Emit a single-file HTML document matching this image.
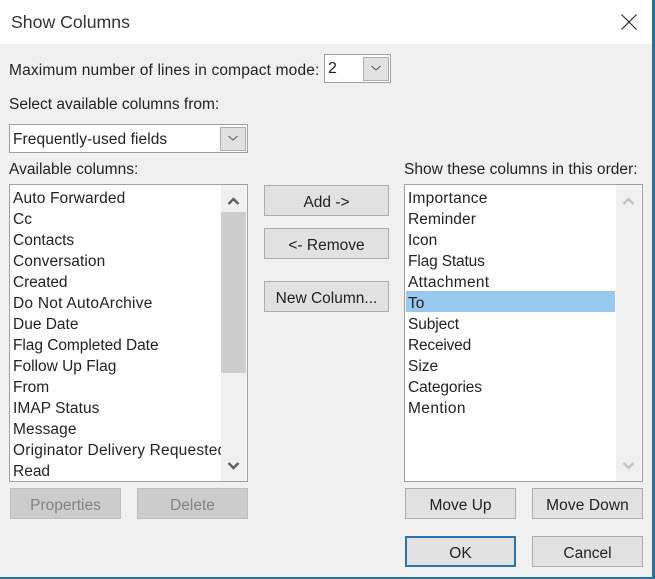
<!DOCTYPE html>
<html><head><meta charset="utf-8">
<style>
html,body{margin:0;padding:0;width:655px;height:579px;overflow:hidden;background:#2a6f9e}
*{box-sizing:border-box}
#d{position:absolute;left:0;top:0;width:652px;height:577px;background:#f0f0f0;font-family:"Liberation Sans",sans-serif;font-size:15.5px;color:#222}
#t{position:absolute;left:0;top:0;width:652px;height:44px;background:#fff}
.a{position:absolute;white-space:nowrap;line-height:21px}
.b{position:absolute;background:#e1e1e1;border:1px solid #adadad;text-align:center;white-space:nowrap;color:#222}
.dis{background:#ccc;border-color:#bfbfbf;color:#838383}
.box{position:absolute;background:#fff;border:1px solid #a0a0a0;overflow:hidden}
.dd{position:absolute;background:#e1e1e1;border:1px solid #adadad}
.it{position:absolute;left:3px;white-space:nowrap;line-height:21px;height:21px}
.sb{position:absolute;background:#f0f0f0;width:25px}
</style></head><body>
<div id="d">
<div id="t"></div>
<div class="a" style="left:11px;top:12px;font-size:17.7px;color:#333">Show Columns</div>
<svg style="position:absolute;left:620px;top:13px" width="18" height="18"><path d="M1.5 1.5L16.5 16.5M16.5 1.5L1.5 16.5" stroke="#222" stroke-width="1.1" fill="none"/></svg>

<div class="a" style="left:9px;top:60px;letter-spacing:.16px">Maximum number of lines in compact mode:</div>
<div class="box" style="left:324px;top:54px;width:67px;height:29px"><span class="a" style="left:3px;top:3px;font-size:16px">2</span>
<div class="dd" style="left:38px;top:2px;width:26px;height:24px"><svg width="24" height="22" style="display:block"><path d="M7.5 8L12 12L16.5 8" stroke="#555" stroke-width="1" fill="none"/></svg></div></div>

<div class="a" style="left:9px;top:94px">Select available columns from:</div>
<div class="box" style="left:9px;top:124px;width:239px;height:29px"><span class="a" style="left:3px;top:4px;letter-spacing:.08px">Frequently-used fields</span>
<div class="dd" style="left:210px;top:2px;width:26px;height:24px"><svg width="24" height="22" style="display:block"><path d="M7.5 8L12 12L16.5 8" stroke="#555" stroke-width="1" fill="none"/></svg></div></div>

<div class="a" style="left:9px;top:159px;letter-spacing:.02px">Available columns:</div>
<div class="a" style="left:404px;top:159px;letter-spacing:.03px">Show these columns in this order:</div>

<div class="box" style="left:9px;top:184px;width:239px;height:298px">
<div class="it" style="top:3px;letter-spacing:.15px">Auto Forwarded</div>
<div class="it" style="top:24px">Cc</div>
<div class="it" style="top:45px">Contacts</div>
<div class="it" style="top:66px;letter-spacing:.08px">Conversation</div>
<div class="it" style="top:87px;letter-spacing:-.1px">Created</div>
<div class="it" style="top:108px;letter-spacing:.24px">Do Not AutoArchive</div>
<div class="it" style="top:129px">Due Date</div>
<div class="it" style="top:150px;letter-spacing:-.05px">Flag Completed Date</div>
<div class="it" style="top:171px">Follow Up Flag</div>
<div class="it" style="top:192px">From</div>
<div class="it" style="top:213px;letter-spacing:.05px">IMAP Status</div>
<div class="it" style="top:234px;letter-spacing:.1px">Message</div>
<div class="it" style="top:255px;letter-spacing:.2px">Originator Delivery Requested</div>
<div class="it" style="top:276px">Read</div>
<div class="sb" style="left:211px;top:0;height:296px">
<div style="position:absolute;left:0;top:27px;width:25px;height:161px;background:#cdcdcd"></div>
<svg width="25" height="296" style="position:absolute;left:0;top:0"><path d="M7.5 19L12.5 14L17.5 19" stroke="#606060" stroke-width="2.4" fill="none"/><path d="M7.5 278L12.5 283L17.5 278" stroke="#606060" stroke-width="2.4" fill="none"/></svg>
</div>
</div>

<div class="box" style="left:404px;top:184px;width:239px;height:298px">
<div class="it" style="top:3px;letter-spacing:.2px">Importance</div>
<div class="it" style="top:24px;letter-spacing:.1px">Reminder</div>
<div class="it" style="top:45px">Icon</div>
<div class="it" style="top:66px;letter-spacing:-.15px">Flag Status</div>
<div class="it" style="top:87px;letter-spacing:.3px">Attachment</div>
<div style="position:absolute;left:1px;top:106px;width:209px;height:21px;background:#99c9ec"></div>
<div class="it" style="top:108px">To</div>
<div class="it" style="top:129px;letter-spacing:-.1px">Subject</div>
<div class="it" style="top:150px;letter-spacing:-.2px">Received</div>
<div class="it" style="top:171px">Size</div>
<div class="it" style="top:192px;letter-spacing:-.1px">Categories</div>
<div class="it" style="top:213px;letter-spacing:.4px">Mention</div>
<div class="sb" style="left:211px;top:0;height:296px">
<svg width="25" height="296" style="position:absolute;left:0;top:0"><path d="M7.5 19L12.5 14L17.5 19" stroke="#c4c4c4" stroke-width="2.4" fill="none"/><path d="M7.5 278L12.5 283L17.5 278" stroke="#c4c4c4" stroke-width="2.4" fill="none"/></svg>
</div>
</div>

<div class="b" style="left:264px;top:185px;width:125px;height:31px;line-height:33px">Add -&gt;</div>
<div class="b" style="left:264px;top:228px;width:125px;height:31px;line-height:33px">&lt;- Remove</div>
<div class="b" style="left:264px;top:281px;width:125px;height:31px;line-height:33px">New Column...</div>

<div class="b dis" style="left:10px;top:488px;width:111px;height:31px;line-height:33px">Properties</div>
<div class="b dis" style="left:137px;top:488px;width:111px;height:31px;line-height:33px">Delete</div>
<div class="b" style="left:405px;top:488px;width:111px;height:31px;line-height:33px">Move Up</div>
<div class="b" style="left:532px;top:488px;width:111px;height:31px;line-height:33px;letter-spacing:.1px">Move Down</div>
<div class="b" style="left:405px;top:536px;width:111px;height:31px;line-height:31px;border:2px solid #2a74a8">OK</div>
<div class="b" style="left:532px;top:536px;width:111px;height:31px;line-height:33px">Cancel</div>
</div>
</body></html>
